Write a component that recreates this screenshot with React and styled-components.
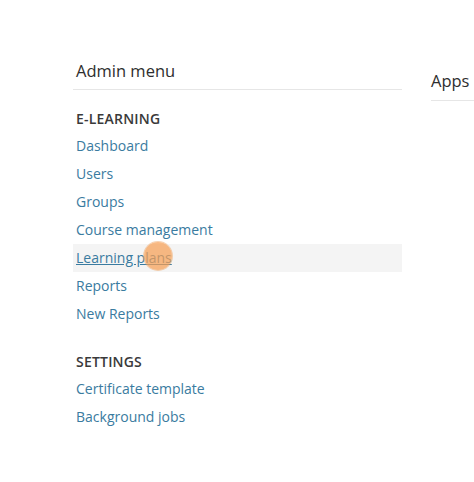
import React from 'react';
import styled, { createGlobalStyle } from 'styled-components';

const GlobalStyle = createGlobalStyle`
  body {
    margin: 0;
    background: #fff;
    font-family: "Open Sans", "Liberation Sans", sans-serif;
  }
`;

const Page = styled.div`
  display: flex;
  gap: 29px;
  padding: 60px 0 0 73px;
  width: 474px;
  height: 482px;
  box-sizing: border-box;
  overflow: hidden;
`;

const Menu = styled.nav`
  flex: 0 0 329px;
`;

const Title = styled.h2`
  margin: 0;
  padding: 0 0 7px 3px;
  font-size: 16.5px;
  line-height: 22px;
  font-weight: 400;
  color: #2e2e2e;
  border-bottom: 1px solid #e6e6e6;
`;

const SectionHeading = styled.h3`
  margin: ${(p) => (p.first ? '19px' : '24px')} 0 3px;
  padding-left: 3px;
  font-size: 14px;
  line-height: 20px;
  font-weight: 600;
  color: #3a3a3a;
  letter-spacing: 0.2px;
`;

const List = styled.ul`
  list-style: none;
  margin: 0;
  padding: 0;
`;

const Item = styled.li`
  position: relative;
  height: 28px;
  padding-left: 3px;
  background: ${(p) => (p.active ? '#f4f4f4' : 'transparent')};
`;

const Link = styled.a`
  font-size: 14px;
  line-height: 28px;
  color: #3a7ba0;
  text-decoration: ${(p) => (p.active ? 'underline' : 'none')};
  cursor: pointer;
`;

const Cursor = styled.span`
  position: absolute;
  left: 71px;
  top: -2px;
  width: 28px;
  height: 28px;
  border-radius: 50%;
  background: rgba(246, 160, 85, 0.72);
  box-shadow: 0 0 0 1px rgba(240, 165, 100, 0.5);
  pointer-events: none;
`;

const Side = styled.div`
  flex: 0 0 auto;
  width: 120px;
  padding-top: 10px;
`;

const SideTitle = styled.h2`
  margin: 0;
  padding-bottom: 8px;
  font-size: 16.5px;
  line-height: 22px;
  font-weight: 400;
  color: #2e2e2e;
  border-bottom: 1px solid #e6e6e6;
`;

const sections = [
  {
    name: 'E-LEARNING',
    items: ['Dashboard', 'Users', 'Groups', 'Course management', 'Learning plans', 'Reports', 'New Reports'],
  },
  {
    name: 'SETTINGS',
    items: ['Certificate template', 'Background jobs'],
  },
];

const App = () => {
  return (
    <>
      <GlobalStyle />
      <Page>
        <Menu>
          <Title>Admin menu</Title>
          {sections.map((section, i) => (
            <div key={section.name}>
              <SectionHeading first={i === 0}>{section.name}</SectionHeading>
              <List>
                {section.items.map((item) => {
                  const active = item === 'Learning plans';
                  return (
                    <Item key={item} active={active}>
                      <Link active={active}>{item}</Link>
                      {active && <Cursor />}
                    </Item>
                  );
                })}
              </List>
            </div>
          ))}
        </Menu>
        <Side>
          <SideTitle>Apps</SideTitle>
        </Side>
      </Page>
    </>
  );
};

export default App;
